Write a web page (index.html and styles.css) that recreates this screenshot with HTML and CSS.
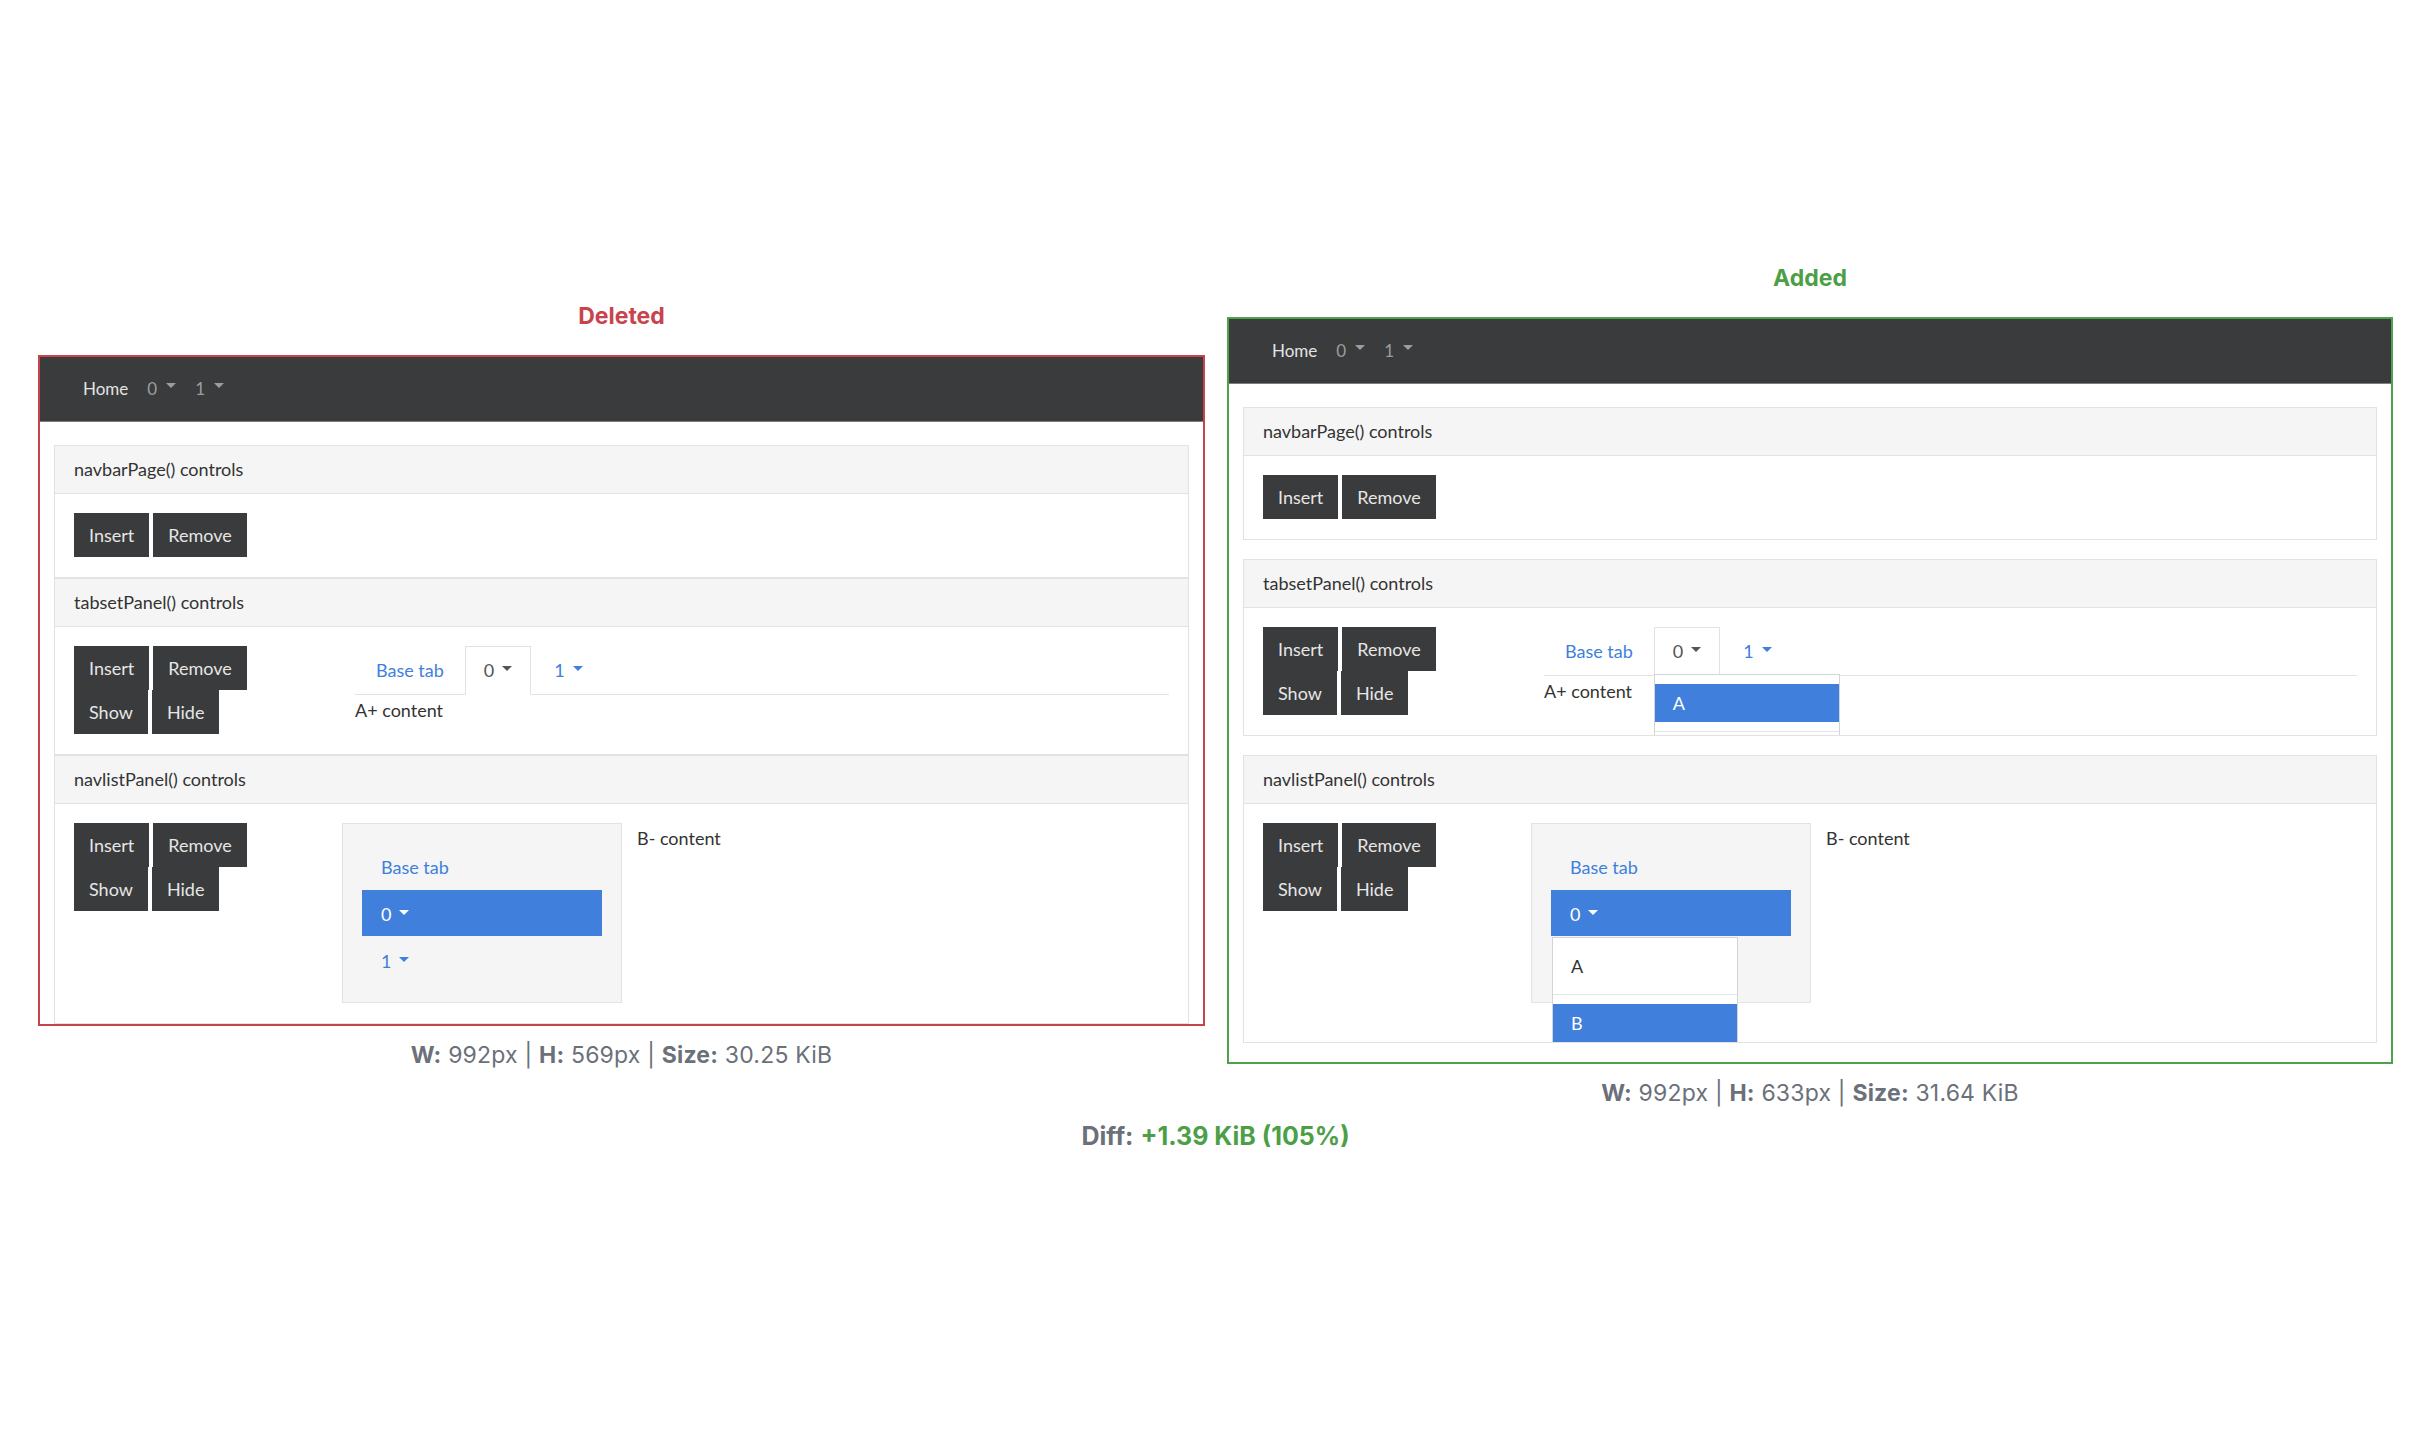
FILE: index.html
```html
<!DOCTYPE html>
<html lang="en">
<head>
<meta charset="utf-8">
<title>Screenshot diff</title>
<link rel="stylesheet" href="styles.css">
</head>
<body>
<div class="compare">
  <div class="sides">
    <section class="side">
      <h2 class="side-title deleted">Deleted</h2>
      <div class="shot shot-deleted">
        <div class="app">
          <nav class="navbar">
            <span class="nav-item active">Home</span>
            <span class="nav-item">0<i class="caret"></i></span>
            <span class="nav-item">1<i class="caret"></i></span>
          </nav>
          <div class="container">
            <div class="panel">
              <div class="panel-heading">navbarPage() controls</div>
              <div class="panel-body">
                <div class="btn-row"><button class="btn">Insert</button><button class="btn">Remove</button></div>
              </div>
            </div>
            <div class="panel">
              <div class="panel-heading">tabsetPanel() controls</div>
              <div class="panel-body split">
                <div class="btn-col tabset-col">
                  <div class="btn-row"><button class="btn">Insert</button><button class="btn">Remove</button></div>
                  <div class="btn-row"><button class="btn">Show</button><button class="btn">Hide</button></div>
                </div>
                <div class="tabset">
                  <ul class="tabs">
                    <li class="tab"><a class="tab-link">Base tab</a></li>
                    <li class="tab active"><a class="tab-link">0<i class="caret"></i></a></li>
                    <li class="tab"><a class="tab-link">1<i class="caret"></i></a></li>
                  </ul>
                  <div class="tab-content">A+ content</div>
                </div>
              </div>
            </div>
            <div class="panel">
              <div class="panel-heading">navlistPanel() controls</div>
              <div class="panel-body split">
                <div class="btn-col navlist-col">
                  <div class="btn-row"><button class="btn">Insert</button><button class="btn">Remove</button></div>
                  <div class="btn-row"><button class="btn">Show</button><button class="btn">Hide</button></div>
                </div>
                <div class="well">
                  <ul class="pills">
                    <li class="pill"><a class="pill-link">Base tab</a></li>
                    <li class="pill active"><a class="pill-link">0<i class="caret"></i></a></li>
                    <li class="pill"><a class="pill-link">1<i class="caret"></i></a></li>
                  </ul>
                </div>
                <div class="nav-content">B- content</div>
              </div>
            </div>
          </div>
        </div>
      </div>
      <p class="meta"><b>W:</b> 992px | <b>H:</b> 569px | <b>Size:</b> 30.25 KiB</p>
    </section>

    <section class="side">
      <h2 class="side-title added">Added</h2>
      <div class="shot shot-added">
        <div class="app">
          <nav class="navbar">
            <span class="nav-item active">Home</span>
            <span class="nav-item">0<i class="caret"></i></span>
            <span class="nav-item">1<i class="caret"></i></span>
          </nav>
          <div class="container spaced">
            <div class="panel">
              <div class="panel-heading">navbarPage() controls</div>
              <div class="panel-body">
                <div class="btn-row"><button class="btn">Insert</button><button class="btn">Remove</button></div>
              </div>
            </div>
            <div class="panel">
              <div class="panel-heading">tabsetPanel() controls</div>
              <div class="panel-body split">
                <div class="btn-col tabset-col">
                  <div class="btn-row"><button class="btn">Insert</button><button class="btn">Remove</button></div>
                  <div class="btn-row"><button class="btn">Show</button><button class="btn">Hide</button></div>
                </div>
                <div class="tabset">
                  <ul class="tabs">
                    <li class="tab"><a class="tab-link">Base tab</a></li>
                    <li class="tab active"><a class="tab-link">0<i class="caret"></i></a>
                      <ul class="menu tab-menu">
                        <li class="menu-item active">A</li>
                        <li class="menu-divider"></li>
                        <li class="menu-item">B</li>
                      </ul>
                    </li>
                    <li class="tab"><a class="tab-link">1<i class="caret"></i></a></li>
                  </ul>
                  <div class="tab-content">A+ content</div>
                </div>
              </div>
            </div>
            <div class="panel">
              <div class="panel-heading">navlistPanel() controls</div>
              <div class="panel-body split tall">
                <div class="btn-col navlist-col">
                  <div class="btn-row"><button class="btn">Insert</button><button class="btn">Remove</button></div>
                  <div class="btn-row"><button class="btn">Show</button><button class="btn">Hide</button></div>
                </div>
                <div class="well">
                  <ul class="pills">
                    <li class="pill"><a class="pill-link">Base tab</a></li>
                    <li class="pill active"><a class="pill-link">0<i class="caret"></i></a>
                      <ul class="menu pill-menu">
                        <li class="menu-item">A</li>
                        <li class="menu-divider"></li>
                        <li class="menu-item active">B</li>
                      </ul>
                    </li>
                    <li class="pill"><a class="pill-link">1<i class="caret"></i></a></li>
                  </ul>
                </div>
                <div class="nav-content">B- content</div>
              </div>
            </div>
          </div>
        </div>
      </div>
      <p class="meta"><b>W:</b> 992px | <b>H:</b> 633px | <b>Size:</b> 31.64 KiB</p>
    </section>
  </div>
  <p class="diff"><b>Diff:</b> <b class="plus">+1.39 KiB (105%)</b></p>
</div>
</body>
</html>
```

FILE: styles.css
```css
html, body {
  margin: 0;
  padding: 0;
  background: #ffffff;
}

body {
  font-family: Inter, "Liberation Sans", Arial, sans-serif;
  color: #6b7079;
}

.compare {
  padding: 264px 0 0 38px;
  width: 2355px;
}

.sides {
  display: flex;
  align-items: center;
  gap: 22px;
}

.side {
  display: flex;
  flex-direction: column;
  align-items: center;
}

.side-title {
  margin: 0 0 25px;
  font-size: 23px;
  line-height: 28px;
  font-weight: 700;
}

.side-title.deleted { color: #c8434c; }
.side-title.added { color: #4c9f47; }

.meta {
  margin: 15px 0 0;
  font-size: 23px;
  line-height: 28px;
  color: #6b7079;
  letter-spacing: 0.2px;
}

.meta b { font-weight: 700; }

.diff {
  margin: 14px 0 0;
  text-align: center;
  font-size: 25px;
  line-height: 30px;
  color: #6b7079;
}

.diff .plus { color: #4c9f47; }

/* screenshot frames */
.shot {
  box-sizing: border-box;
  overflow: hidden;
  background: #ffffff;
}

.shot-deleted {
  width: 1167px;
  height: 671px;
  border: 2px solid #c8434c;
}

.shot-added {
  width: 1166px;
  height: 747px;
  border: 2px solid #51a14b;
}

/* the app inside */
.app {
  font-family: Lato, "Noto Sans", sans-serif;
  font-size: 18px;
  color: #333333;
}

.navbar {
  display: flex;
  align-items: center;
  gap: 19px;
  height: 64px;
  padding-left: 43px;
  background: #3a3b3d;
  border-bottom: 1px solid #7d7e80;
  font-size: 17px;
  line-height: 64px;
}

.nav-item { color: #9d9d9d; }
.nav-item.active { color: #e4e4e4; }

.caret {
  display: inline-block;
  width: 0;
  height: 0;
  margin-left: 8px;
  border-top: 5px solid currentColor;
  border-left: 5px solid transparent;
  border-right: 5px solid transparent;
  vertical-align: 6px;
}

.navbar .caret {
  margin-left: 9px;
  vertical-align: 7px;
}

.container {
  padding: 23px 14px 0;
}

.panel {
  border: 1px solid #e2e2e2;
  background: #ffffff;
  overflow: hidden;
}

.container.spaced .panel { margin-bottom: 19px; }

.panel-heading {
  height: 47px;
  line-height: 47px;
  padding-left: 19px;
  background: #f5f5f5;
  border-bottom: 1px solid #e2e2e2;
}

.panel-body {
  padding: 19px 19px 20px;
}

.panel-body.split {
  display: flex;
  align-items: flex-start;
}

.panel-body.tall { padding-bottom: 39px; }

.btn-row {
  display: flex;
  gap: 4px;
}

.btn {
  height: 44px;
  padding: 0 15px;
  margin: 0;
  border: 0;
  border-radius: 0;
  background: #3a3b3d;
  color: #e6e6e6;
  font-family: Lato, "Noto Sans", sans-serif;
  font-size: 18px;
  line-height: 44px;
}

.btn-col { flex: none; }
.tabset-col { width: 281px; }
.navlist-col { width: 268px; }

/* tabs */
.tabset { flex: 1; }

.tabs {
  display: flex;
  margin: 0;
  padding: 0;
  list-style: none;
  border-bottom: 1px solid #e2e2e2;
}

.tab {
  position: relative;
  margin: 0 2px -1px 0;
}

.tab-link {
  display: block;
  padding: 0 18px 0 20px;
  border: 1px solid transparent;
  line-height: 47px;
  color: #3e80dc;
}

.tab.active .tab-link {
  padding: 0 18px;
  border-color: #e2e2e2;
  border-bottom-color: #ffffff;
  background: #ffffff;
  color: #555555;
}

.tab-content {
  padding-top: 2px;
  line-height: 26px;
}

/* dropdown menus */
.menu {
  position: absolute;
  z-index: 2;
  box-sizing: border-box;
  width: 186px;
  margin: 0;
  padding: 9px 0;
  list-style: none;
  background: #ffffff;
  border: 1px solid #d4d4d4;
}

.tab-menu { top: 47px; left: 0; }
.pill-menu { top: 47px; left: 1px; }

.menu-item {
  height: 38px;
  line-height: 38px;
  padding-left: 18px;
  color: #333333;
}

.menu-item.active {
  background: #4080dc;
  color: #ffffff;
}

.menu-divider {
  height: 1px;
  margin: 9px 0;
  background: #e5e5e5;
}

/* navlist */
.well {
  box-sizing: border-box;
  flex: none;
  width: 280px;
  padding: 19px;
  background: #f5f5f5;
  border: 1px solid #e2e2e2;
}

.pills {
  margin: 0;
  padding: 0;
  list-style: none;
}

.pill { position: relative; }
.pill + .pill { margin-top: 1px; }

.pill-link {
  display: block;
  height: 44px;
  padding: 2px 0 0 19px;
  line-height: 44px;
  color: #3e80dc;
}

.pill.active > .pill-link {
  background: #4080dc;
  color: #ffffff;
}

.nav-content {
  margin-left: 15px;
  padding-top: 2px;
  line-height: 26px;
}
```
